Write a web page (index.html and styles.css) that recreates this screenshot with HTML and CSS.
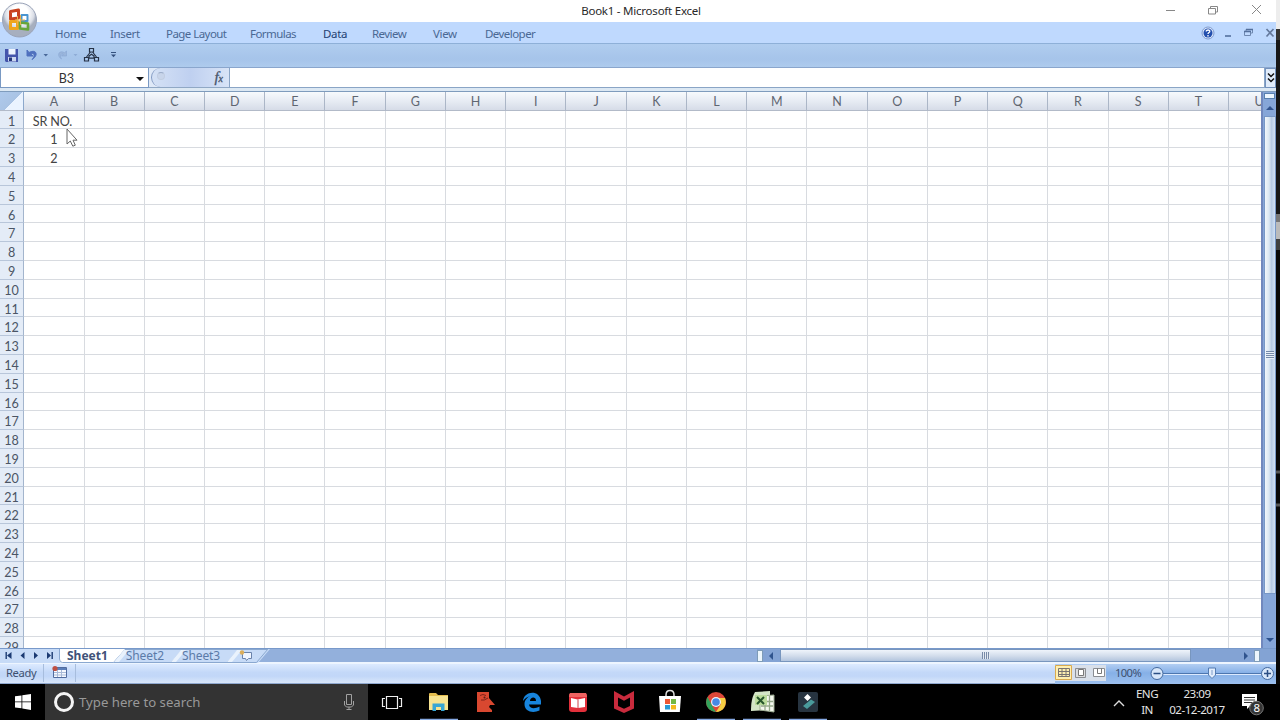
FILE: index.html
```html
<!DOCTYPE html>
<html lang="en">
<head>
<meta charset="utf-8">
<title>Book1 - Microsoft Excel</title>
<link rel="stylesheet" href="styles.css">
</head>
<body>
<div class="desktop">
<main class="app">
  <header class="titlebar">
    <span class="title">Book1 - Microsoft Excel</span>
    <svg class="window-controls" width="110" height="22" viewBox="0 0 110 22"><g fill="none" stroke="#888"><path d="M0 10.500h9M42.500 8.500h7v5.500h-7zM44.500 8V6.500h7V12h-2M86 5l9 9M95 5l-9 9"/></g></svg>
  </header>
  <svg class="office" width="36" height="38" viewBox="0 0 36 38">
    <defs><radialGradient id="orb" cy=".3"><stop offset=".5" stop-color="#fff"/><stop offset=".85" stop-color="#d9dde6"/><stop offset="1" stop-color="#a7afbf"/></radialGradient></defs>
    <circle cx="17.500" cy="19" r="17" fill="url(#orb)" stroke="#9aa3b8"/>
    <g fill="none" stroke-width="3" stroke-linejoin="round"><path d="M8.500 10.500l8-1.500v8l-8 1z" stroke="#c9431f"/><path d="M19.500 14h6v6h-6z" stroke="#4a94d0" stroke-width="2"/><path d="M8.500 20.500h7v7h-7z" stroke="#f0a51c"/><path d="M18 21.500l8 1v6l-8-1z" stroke="#67a63b" stroke-width="2.600"/></g>
    <path d="M15.500 15v9M18.500 14v10M13 19h10" stroke="#eab24a" fill="none"/>
  </svg>
  <nav class="tabs">
    <span class="home">Home</span><span class="insert">Insert</span><span class="layout">Page Layout</span><span class="formulas">Formulas</span><span class="data">Data</span><span class="review">Review</span><span class="view">View</span><span class="developer">Developer</span>
    <svg class="tab-controls" width="75" height="20" viewBox="0 0 75 20">
      <circle cx="7" cy="10" r="6" fill="#dce8fa" stroke="#7f9bd0"/><circle cx="7" cy="10" r="4.500" fill="#234fae"/><path d="M5.200 8.500c0-2 3.800-2 3.600 0c0 1-1.800 1.200-1.800 2.400M7 12v1.400" fill="none" stroke="#fff" stroke-width="1.300"/>
      <path d="M24 13h6" stroke="#54709d" stroke-width="1.600"/><path d="M43.500 8.500h6v4h-6zM45 8V6.500h6.500V10H50" fill="none" stroke="#6f88b0"/><path d="M43 8.500h7M45 6.500h7" stroke="#54709d" stroke-width="1.500"/><path d="M65.500 6l7 7.500M72.500 6l-7 7.500" stroke="#64799d" stroke-width="1.700"/>
    </svg>
  </nav>
  <div class="quick">
    <svg width="125" height="23" viewBox="0 0 125 23">
      <path d="M5 5h13v13H6l-1-1z" fill="#4455ab"/><path d="M8.500 5h7v5.500h-7z" fill="#edf4fe"/><path d="M8 13h8v4.500H8z" fill="#cad6ee"/><path d="M9 13.500h3V17H9z" fill="#263779"/>
      <path d="M27 6v6h6l-2.200-2c3-2 5 1.500 1.200 5.500c7-4 4.500-11-3-7z" fill="#4f70be" stroke="#4f70be" stroke-width="1"/>
      <path d="M43.500 10h4.500l-2.200 2.500z" fill="#496899"/><path d="M66.500 7v5h-5l1.800-1.900c-2.500-1-3.800 1.700-1.800 4.900c-5-3-3-9.500 3-6.300z" fill="#9bb6dc" stroke="#86a5d2" stroke-width=".6"/><path d="M73.500 10h4l-2 2.300z" fill="#8facd6"/>
      <g fill="none" stroke="#263246" stroke-width="1.200"><path d="M89.500 4.500h4v3.500h-4zM84.500 13.500h4v3.500h-4zM94.500 13.500h4v3.500h-4zM90.500 8l-4 5M92.500 8l4 5M89 12l2.500-1.800L94 12v2.200h-5z"/></g>
      <path d="M111 8.500h5" stroke="#34517e"/><path d="M111 10.500h5l-2.500 2.800z" fill="#34517e"/>
    </svg>
  </div>
  <div class="formula">
    <div class="namebox"><span>B3</span><i class="down"></i></div>
    <div class="fx"><div class="pill"><i class="dimple"></i><b>f<small>x</small></b></div></div>
    <div class="entry"></div>
    <div class="expand"><svg width="10" height="13" viewBox="0 0 10 13"><path d="M2 1.500l3 3 3-3M2 6.500l3 3 3-3" fill="none" stroke="#111" stroke-width="1.500"/></svg></div>
  </div>
  <section class="workspace">
    <div class="sheet" id="sheet"></div>
    <aside class="vscroll"><i class="split"></i><i class="up"></i><div class="vthumb"><i class="grip"></i></div><i class="down-arrow"></i></aside>
  </section>
  <div class="sheetbar">
    <svg class="sheet-tabs" width="270" height="14" viewBox="0 0 270 14">
      <path d="M0 0h270l-12 14H0z" fill="#c7dbf7"/>
      <path d="M59 0H125L113 14H62q-3 0-3-4z" fill="#fff"/>
      <path d="M59.500 0v10q0 3.500 3 3.500h51L125 .5h142M113.500 13.500h143L268 0M171 13.500L182.500.5M227 13.500L238.500.5" fill="none" stroke="#8aa8d0"/>
      <path d="M114 13L124 1h5L119 13zM171 13L181 1h5l-10 12zM227 13L237 1h5l-10 12z" fill="#e9f2fd"/>
      <g fill="#1b3a72"><path d="M5.500 3h1.400v7H5.500zM11.500 3v7L7 6.500zM24.500 3v7l-4-3.500zM34 3v7l4-3.500zM47 3v7l4-3.500zM51.500 3h1.400v7h-1.400z"/></g>
      <path d="M242.500 3.500h9v6h-3l-2 2-1-2h-3z" fill="#eff5ff" stroke="#6a83ab"/><circle cx="242" cy="3.500" r="2.200" fill="#dcae5b"/>
    </svg>
    <div class="tab-labels"><b>Sheet1</b><span>Sheet2</span><span>Sheet3</span></div>
    <div class="hscroll"><i class="hsplit"></i><i class="left"></i><div class="hthumb"><i class="hgrip"></i></div><i class="right"></i><i class="hsplit"></i></div>
  </div>
  <footer class="status">
    <span class="ready">Ready</span>
    <svg class="macro" width="34" height="19" viewBox="0 0 34 19"><path d="M1.500 0v18M33.500 0v18" stroke="#a7bddd"/><path d="M11.500 3.500h13v10h-13z" fill="#f6f9fe" stroke="#526c9e"/><path d="M12 4h12v2H12z" fill="#5c7fb9"/><path d="M12 8.500h12M12 11h12M15.500 6v7M19.500 6v7" stroke="#a8bad8"/><circle cx="13" cy="4.500" r="2.600" fill="#bd5044"/></svg>
    <svg class="zoom" width="221" height="20" viewBox="0 0 221 20">
      <path d="M0 0h221v20H0z" fill="url(#zg)"/><defs><linearGradient id="zg" x2="0" y2="1"><stop stop-color="#b2cef3"/><stop offset=".45" stop-color="#86b0e7"/><stop offset="1" stop-color="#9cc0ee"/></linearGradient></defs>
      <path d="M0 1h51v16H0z" fill="#d9e0ea"/><path d="M.5 1.500h16v14H.500z" fill="#fff0b1" stroke="#d9aa50"/><path d="M3.500 4.500h11v8h-11zM3.500 7.500h11M3.500 10.500h11M7 4.500v8M11 4.500v8" fill="none" stroke="#7b7470"/>
      <path d="M20.500 4.500h10v9h-10z" fill="#dcdddf" stroke="#8a8d92"/><path d="M23.500 5.500h5v6h-5z" fill="#fff" stroke="#777"/><path d="M38.500 4.500h11v8h-11z" fill="#fff" stroke="#8a8d92"/><path d="M42.500 4.500v5h4v-5" fill="none" stroke="#777"/>
      <path d="M107 9.500h100" stroke="#4c76af"/><path d="M107 10.500h100" stroke="#dceaff"/>
      <circle cx="102" cy="9.500" r="6" fill="#d8e7fa" stroke="#42689e"/><path d="M98.500 9.500h7" stroke="#2b4e84" stroke-width="1.500"/><circle cx="212.500" cy="9.500" r="6" fill="#d8e7fa" stroke="#42689e"/><path d="M209 9.500h7M212.500 6v7" stroke="#2b4e84" stroke-width="1.500"/>
      <path d="M153.500 4h7v7l-3.500 3.500-3.500-3.500z" fill="#e1edfc" stroke="#537bb2"/><path d="M157 6v5" stroke="#7e9cc9"/>
    </svg>
    <span class="percent">100%</span>
  </footer>
  <div class="cursor"><svg width="12" height="20" viewBox="0 0 12 20"><path d="M1 1v15l3.300-3 2.500 5.200 2.500-1-2.300-5H11z" fill="#fff" stroke="#666"/></svg></div>
</main>
<aside class="edge"></aside>
</div>
<footer class="taskbar">
  <div class="start"><svg width="16" height="16" viewBox="0 0 16 16"><path d="M0 2.300l6.500-.9v6H0zM7.300 1.300L16 0v7.400H7.300zM0 8.300h6.500v6L0 13.500zM7.300 8.300H16V16l-8.700-1.400z" fill="#fff"/></svg></div>
  <div class="search"><i class="cortana"></i><span>Type here to search</span><svg width="12" height="18" viewBox="0 0 12 18"><path d="M3.500 1.500h5v10h-5zM1.500 8v4l2 2h5l2-2V8M6 14v2.500M3.500 16.500h5" fill="none" stroke="#a1a1a1"/></svg></div>
  <svg class="apps" width="462" height="36" viewBox="0 0 462 36">
    <path d="M18.500 12.500h11v12h-11zM17 14.500h-2.500v8H17M31 14.500h2.500v8H31" fill="none" stroke="#eee" stroke-width="1.200"/>
    <path d="M61 10q0-1 1-1h6l2 2h10v15H61z" fill="#e4bd4f"/><path d="M61 12h19v14H61z" fill="#f7e391"/><path d="M64.500 27v-7.500h12V27H73v-4h-5v4z" fill="#38a6d4"/>
    <path d="M109 8h12v6l6 7h-5l-1 2 3 3v2h-15z" fill="#d94830"/><path d="M112 11.500q3-2 6 0M113 16q3 1 7-2" fill="none" stroke="#7c2118"/><circle cx="116.500" cy="13.500" r="1" fill="#562018"/>
    <path d="M155 17c.7-10 16.500-12 18 0v3.500h-12c.5 4.500 6 4.500 10.500 2v4c-6.500 3-15 1.300-15-6.500c0-4 3-7 6-8c-3 .5-5.700 2.500-7.500 5m7 0h6c0-5-6-4-6 0z" fill="#1784dc" fill-rule="evenodd"/>
    <rect x="201" y="9" width="18" height="19" rx="3" fill="#e2303b"/><path d="M202 9h16q1 2 1 4h-18q0-3 1-4" fill="#ef6361"/><path d="M203 14l6.500 1.500L217 14v9l-7 1-7-1z" fill="#fff"/><path d="M210 15.500V24" stroke="#ce4349"/>
    <path d="M246 7l10 5.500L266 7v17.500L256 29l-10-4.500zm4 6.500v8.500l6 2.700 6-2.700v-8.500l-6 3.200z" fill="#c92b3d" fill-rule="evenodd"/>
    <path d="M298 12v-1c0-6 8-6 8 0v1" fill="none" stroke="#ddd" stroke-width="1.500"/><path d="M291 12h22l-1.200 16H292z" fill="#fff"/><path d="M297 15h5v5h-5z" fill="#ee5834"/><path d="M303 15h5v5h-5z" fill="#75b843"/><path d="M297 21h5v4.500h-5z" fill="#299bd6"/><path d="M303 21h5v4.500h-5z" fill="#f4b91d"/>
    <circle cx="348" cy="18" r="10" fill="#dc4739"/><path d="M339.500 13L346 25l2 3a10 10 0 0 1-8.500-15" fill="#32a35b"/><path d="M348 14h9a10 10 0 0 1-9 14l5-8z" fill="#f5ce42"/><circle cx="348" cy="18" r="5" fill="#eef3fb"/><circle cx="348" cy="18" r="3.800" fill="#4889e4"/>
    <path d="M387 8l15-1v19l-19 1c0-8 1-14 4-19z" fill="#d4e5c7"/><path d="M392 12l14-1v17l-14-2z" fill="#f5f8ef" stroke="#9cab91"/><path d="M397 20v6M401.500 12v15M393 17.500h12M393 22h12" stroke="#96a98b" stroke-width="1.300"/><path d="M387 11h12v10h-12z" fill="#bcdc9d"/><path d="M389 13l7 7M396 13l-7 7" stroke="#26552c" stroke-width="2"/>
    <rect x="430" y="8" width="20" height="20" rx="2" fill="#273440"/><path d="M436 13.500l3.500-3.500 3.500 3.500-3.500 3.500z" fill="#fff"/><path d="M435 22l8-6.500 4 2.500-8 7z" fill="#4a9b9c"/>
    <path d="M52 35.500h38M329 35.500h38M375 35.500h38M421 35.500h38" stroke="#86a9e2" stroke-width="1.500"/>
  </svg>
  <div class="tray"><svg class="chevron" width="12" height="8" viewBox="0 0 12 8"><path d="M1 7l5-5 5 5" fill="none" stroke="#ddd" stroke-width="1.400"/></svg>
    <div class="language">ENG<br>IN</div><div class="clock">23:09<br>02-12-2017</div>
    <svg width="24" height="30" viewBox="0 0 24 30"><path d="M1 8h15v12H9l-3 3v-3H1z" fill="#fff"/><path d="M3 11.500h11M3 14h11M3 16.500h8" stroke="#333"/><circle cx="15.500" cy="22" r="6.800" fill="#353535" stroke="#777"/><text x="15.500" y="26" text-anchor="middle">8</text></svg>
  </div>
</footer>
<script src="sheet.js"></script>
</body>
</html>
```
FILE: styles.css
```css
*{box-sizing:border-box}
body{margin:0;width:1280px;height:720px;overflow:hidden;font-family:"Noto Sans","Open Sans",sans-serif;color:#333;background:#000}
svg{display:block;flex-shrink:0}
.desktop{display:flex;height:684px}
.app{position:relative;width:1276px;height:684px;background:#fff;overflow:hidden}
.edge{width:4px;background:linear-gradient(#ededed 0 29px,#343434 29px 40px,#171717 40px 214px,#777 214px 222px,#bbb 222px 239px,#404040 239px 250px,#080808 250px 470px,#555 471px 473px,#080808 474px 503px,#555 504px 506px,#080808 507px)}
.titlebar{height:22px;position:relative;display:flex;justify-content:center;background:#fff}
.title{font-size:11.500px;line-height:21px;letter-spacing:-.23px;color:#292929;padding-left:6px}
.window-controls{position:absolute;left:1166px;top:0}
.office{position:absolute;left:2px;top:1px;z-index:3}
.tabs{height:22px;background:#bfd9fe;border-bottom:1px solid #8eb0d8;display:flex;align-items:center;padding-left:55px;color:#4a6894;font-size:11.500px;line-height:22px;letter-spacing:-.55px}
.home{width:55px}.insert{width:56px}.layout{width:84px}.formulas{width:73px}.data{width:49px;color:#233f72}.review{width:61px}.view{width:52px}.developer{width:60px}
.tabs>span{white-space:nowrap;padding-top:2px}.home,.insert,.data,.view{letter-spacing:-.35px}.tab-controls{margin-left:auto}
.quick{height:24px;background:linear-gradient(#b0cdef,#a6c4ea 65%,#aecbed);border-bottom:1px solid #8aa6cd}
.formula{height:24px;display:flex;border-bottom:1px solid #7f9cbd;background:#dce8f3;padding-bottom:3px}
.namebox{width:149px;border:1px solid #7999c3;border-top:0;background:#fff;display:flex;align-items:center;justify-content:flex-end;gap:62px;padding-right:4px;font:12.500px Lato,sans-serif}
.namebox span{padding-top:2px}
.down{border:4px solid transparent;border-top-color:#111;border-bottom:0;margin-top:2px}
.fx{width:80px;background:#dfe9f7;border-bottom:1px solid #90a8c5;padding-left:2px}
.pill{height:19px;border-radius:10px 0 0 10px;background:linear-gradient(90deg,#d4e1f5,#bfd0f0,#d8e4f7);border-left:1px solid #839bc3;display:flex;align-items:center;justify-content:space-between;padding:0 6px 0 5px;font-family:"Liberation Serif",serif}
.pill b{font-size:15px;font-style:italic;font-weight:400;color:#46546a;-webkit-text-stroke:.3px #46546a}.pill small{font-size:10px}
.dimple{width:8px;height:8px;border:1px solid #c2cee1;border-top-color:#9bacc9;border-radius:50%;background:#c8d5ea;margin-bottom:3px}
.entry{flex:1;background:#fff;border:1px solid #8aa5c6;border-top:0}
.expand{width:11px;background:#e1ecfa;border:1px solid #7493be;padding-top:3px}
.workspace{height:556px;display:flex}
.sheet{width:1261px;height:556px;overflow:hidden;font-family:Lato,sans-serif}
.row,.heads{display:grid;grid-template-columns:24.500px repeat(20,60.240px) 61px;width:1291px;margin-left:-.2px}
.heads{height:18.600px;grid-template-rows:18.600px;background:linear-gradient(#f7fafd,#e6ebf3 50%,#d4dae6);color:#5f6671;font-size:12.500px;line-height:20px;text-align:center}
.heads span{border-right:1px solid #abb6c7;border-bottom:1px solid #b2bac8}
.heads .corner{background:linear-gradient(135deg,#aec9ec,#a9c3e4 55%,#eaf3ff 56%);border-right-color:#8ca8cc}
.row{height:18.810px;grid-template-rows:18.810px;font-size:12.600px;line-height:21px;text-align:center;color:#444}
.row span{border-right:1px solid #d8dbe0;border-bottom:1px solid #d8dbe0;white-space:nowrap}
.row .number{background:#e4ecf7;color:#4b5565;border-right-color:#a3b5cd;border-bottom-color:#b8c6da}
.row .serial{padding-right:3px;letter-spacing:-.15px}
.vscroll{width:15px;border-left:2px solid #7188bd;background:#86a6d8;display:flex;flex-direction:column;align-items:center}
.split{height:6px;width:11px;background:#edf7ff;border:1px solid #5880af;margin-top:1px}
.up{height:17px;width:13px;display:flex;align-items:center;justify-content:center}.up:after{content:"";border:4px solid transparent;border-bottom-color:#31538e;border-top:0}
.vthumb{height:478px;width:12px;border:1px solid #7797c6;background:linear-gradient(90deg,#f1f6fb,#dbe7f2 40%,#b6cae4 65%,#d1e1f4);display:flex;align-items:center;justify-content:center}
.grip{width:8px;height:8px;background:repeating-linear-gradient(#758aaa 0 1px,#e7eff8 1px 2px)}
.down-arrow{border:4px solid transparent;border-top-color:#2c518d;border-bottom:0;margin-top:44px}
.sheetbar{height:16px;position:relative;background:#93b0dc;display:flex;border-top:1px solid #7899ca;border-bottom:2px solid #edf5ff}
.tab-labels{position:absolute;left:67px;top:0;display:flex;gap:18px;font-size:12px;line-height:14px;letter-spacing:-.1px;color:#5b7aa8}
.tab-labels b{color:#405278;letter-spacing:0}
.hscroll{display:flex;align-items:center;margin-left:487px;width:519px;background:#83a3d4}
.hsplit{width:6px;height:12px;background:#ecf6fc;border:1px solid #7e9cb8}.left{margin-left:6px;border:4px solid transparent;border-right-color:#30548e;border-left:0}
.hthumb{width:411px;height:13px;margin-left:7px;background:linear-gradient(#eff4fb,#d1dceb 55%,#b3c5de);border:1px solid #7896be;display:flex;align-items:center;justify-content:center}
.hgrip{width:8px;height:7px;background:repeating-linear-gradient(90deg,#788ba8 0 1px,#e3e9f2 1px 2px)}
.right{margin-left:53px;border:4px solid transparent;border-left-color:#30548e;border-right:0}.right+.hsplit{margin-left:6px}
.status{height:20px;display:flex;position:relative;background:linear-gradient(#dceaff,#c3d8f8 45%,#c2d7f8 65%,#d9e7fa);color:#3d506f;font-size:11.200px;line-height:18px;letter-spacing:-.35px;border-bottom:1px solid #90a9d0}
.ready{width:42px;padding-left:6px}.zoom{margin-left:979px}.percent{position:absolute;left:1115px;top:0;letter-spacing:-.6px}
.cursor{position:absolute;left:66px;top:128px}
.taskbar{height:36px;background:#000;display:flex;color:#e5e5e5}
.start{width:45px;display:flex;align-items:center;padding-left:15px}.search{width:323px;background:#333;display:flex;align-items:center;padding-left:9px;color:#999;font-size:13.200px}
.cortana{width:20px;height:20px;border:3px solid #f5f5f5;border-radius:50%;margin-right:5px}.search svg{margin-left:auto;margin-right:13px}
.tray{position:relative;display:flex;margin-left:auto;width:167px;font-size:11.600px;line-height:16px;text-align:center;letter-spacing:-.5px;padding-top:2px}
.chevron{margin-top:13px}.language{width:26px;margin-left:9px}.clock{width:58px;margin-left:8px}.tray>svg:last-child{margin-left:15px}.tray text{fill:#fff;font:11.500px "Noto Sans",sans-serif}
```
FILE: sheet.js
```js
const sheet = document.getElementById('sheet');
const columns = 'ABCDEFGHIJKLMNOPQRSTU';
const values = {1: 'SR NO.', 2: '1', 3: '2'};
const heads = document.createElement('div');
heads.className = 'heads';
heads.innerHTML = '<span class="corner"></span>' + [...columns].map(c => `<span>${c}</span>`).join('');
sheet.append(heads);
for (let n = 1; n <= 29; n++) {
  const row = document.createElement('div');
  row.className = 'row';
  row.innerHTML = `<span class="number">${n}</span>` + [...columns].map((c, i) => `<span${i === 0 && n === 1 ? ' class="serial"' : ''}>${i === 0 ? values[n] || '' : ''}</span>`).join('');
  sheet.append(row);
}
```
